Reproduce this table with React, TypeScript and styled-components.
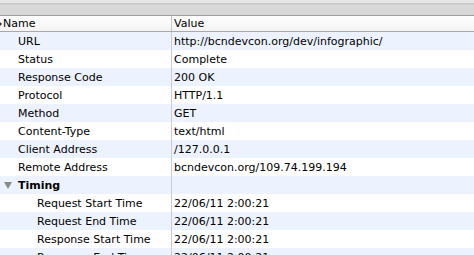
import React from "react";
import styled, { createGlobalStyle } from "styled-components";

const GlobalStyle = createGlobalStyle`
  html, body {
    margin: 0;
    padding: 0;
    background: #ffffff;
  }
  body {
    font-family: "DejaVu Sans", "Liberation Sans", sans-serif;
    font-size: 11px;
    color: #000;
    overflow: hidden;
  }
`;

const Panel = styled.div`
  width: 474px;
  height: 255px;
  overflow: hidden;
  display: flex;
  flex-direction: column;
`;

const TopBar = styled.div`
  flex-shrink: 0;
  height: 12px;
  border-top: 3px solid #e6e6e6;
  border-bottom: 1px solid #9d9d9d;
  background: linear-gradient(#c9c9c9 0, #c9c9c9 1px, #d9d9d9 2px, #d7d7d7 100%);
`;

const HeaderRow = styled.div`
  flex-shrink: 0;
  display: grid;
  grid-template-columns: 171px 1fr;
  height: 15px;
  background: linear-gradient(#ffffff, #f3f3f3);
  border-bottom: 1px solid #a8a8a8;
`;

const HeaderCell = styled.div<{ $first?: boolean }>`
  display: flex;
  align-items: center;
  padding-left: ${(p) => (p.$first ? "3px" : "2px")};
  border-left: ${(p) => (p.$first ? "none" : "1px solid #c6c6c6")};
  font-size: 11px;
  position: relative;
`;

const SortMark = styled.span`
  position: absolute;
  left: -2px;
  top: 4px;
  width: 0;
  height: 0;
  border-top: 4px solid transparent;
  border-bottom: 4px solid transparent;
  border-left: 4px solid #3a2a3a;
`;

const Row = styled.div<{ $alt: boolean }>`
  display: grid;
  grid-template-columns: 171px 1fr;
  height: 18px;
  flex-shrink: 0;
  background: ${(p) => (p.$alt ? "#edf3fe" : "#ffffff")};
`;

const NameCell = styled.div<{ $indent: number; $bold?: boolean }>`
  display: flex;
  align-items: center;
  padding-left: ${(p) => p.$indent}px;
  font-weight: ${(p) => (p.$bold ? 700 : 400)};
  white-space: nowrap;
  overflow: hidden;
`;

const ValueCell = styled.div`
  display: flex;
  align-items: center;
  padding-left: 2px;
  border-left: 1px solid #c9ccd2;
  white-space: nowrap;
`;

const Disclosure = styled.span`
  width: 0;
  height: 0;
  border-left: 4px solid transparent;
  border-right: 4px solid transparent;
  border-top: 7px solid #8a8a8a;
  margin-left: 4px;
  margin-right: 6px;
`;

type Item = {
  name: string;
  value?: string;
  level: number;
  group?: boolean;
};

const items: Item[] = [
  { name: "URL", value: "http://bcndevcon.org/dev/infographic/", level: 1 },
  { name: "Status", value: "Complete", level: 1 },
  { name: "Response Code", value: "200 OK", level: 1 },
  { name: "Protocol", value: "HTTP/1.1", level: 1 },
  { name: "Method", value: "GET", level: 1 },
  { name: "Content-Type", value: "text/html", level: 1 },
  { name: "Client Address", value: "/127.0.0.1", level: 1 },
  { name: "Remote Address", value: "bcndevcon.org/109.74.199.194", level: 1 },
  { name: "Timing", level: 1, group: true },
  { name: "Request Start Time", value: "22/06/11 2:00:21", level: 2 },
  { name: "Request End Time", value: "22/06/11 2:00:21", level: 2 },
  { name: "Response Start Time", value: "22/06/11 2:00:21", level: 2 },
  { name: "Response End Time", value: "22/06/11 2:00:21", level: 2 },
];

const App = () => {
  return (
    <Panel>
      <GlobalStyle />
      <TopBar />
      <HeaderRow>
        <HeaderCell $first>
          <SortMark />
          Name
        </HeaderCell>
        <HeaderCell>Value</HeaderCell>
      </HeaderRow>
      {items.map((item, i) => (
        <Row key={item.name} $alt={i % 2 === 0}>
          <NameCell $indent={item.group ? 0 : item.level === 1 ? 18 : 37} $bold={item.group}>
            {item.group && <Disclosure />}
            {item.name}
          </NameCell>
          <ValueCell>{item.value}</ValueCell>
        </Row>
      ))}
    </Panel>
  );
};

export default App;
